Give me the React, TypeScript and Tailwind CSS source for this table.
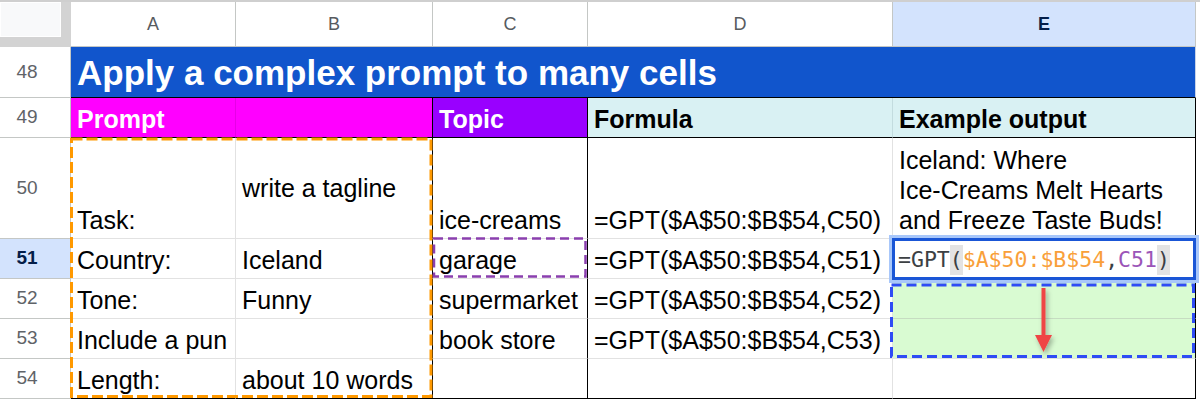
const cols = "grid grid-cols-[71px_165px_197px_155px_305px_303px_4px]";

const cell =
  "flex items-end pb-[3px] pl-[6px] leading-[30px] text-[25px] text-black whitespace-nowrap overflow-hidden border-r border-b";

const rowHead =
  "flex items-center justify-center pr-4 border-r border-b border-r-[#c4c7c5] border-b-[#c4c7c5] text-[19px] text-[#5f6368] bg-white";

const colHead =
  "flex items-center justify-center text-[18px] text-[#575b5f] bg-white border-r border-b border-r-[#c4c7c5] border-b-[#c4c7c5]";

function RowNum({ n, active }: { n: number; active?: boolean }) {
  return (
    <div className={active ? rowHead + " !bg-[#d3e3fd] font-bold !text-[#041e49]" : rowHead}>
      {n}
    </div>
  );
}

function Formula({ row }: { row: number }) {
  return (
    <div className={cell + " border-r-[#e2e2e2] border-b-[#e2e2e2]"}>
      =GPT($A$50:$B$54,C{row})
    </div>
  );
}

export default function App() {
  return (
    <div className="relative w-[1200px] h-[399px] overflow-hidden bg-white font-['Liberation_Sans',Arial,sans-serif]">
      {/* column headers */}
      <div className={cols + " h-[47px] border-t-2 border-t-[#cfcfcf]"}>
        <div className="bg-[#d3d3d3]">
          <div className="w-[61px] h-[35px] bg-[#f8f9fa] border border-white" />
        </div>
        <div className={colHead}>A</div>
        <div className={colHead}>B</div>
        <div className={colHead}>C</div>
        <div className={colHead}>D</div>
        <div className={colHead + " !bg-[#d3e3fd] font-bold !text-[#041e49]"}>E</div>
        <div className="bg-white" />
      </div>

      {/* 48 title */}
      <div className={cols + " h-[51px]"}>
        <RowNum n={48} />
        <div className="col-span-5 flex items-end pb-[4px] pl-[6px] leading-[40px] text-[35px] font-bold text-white whitespace-nowrap bg-[#1155cc] border-r border-b border-r-[#c9d3e6] border-b-black">
          Apply a complex prompt to many cells
        </div>
        <div className="bg-white" />
      </div>

      {/* 49 headers */}
      <div className={cols + " h-[40px]"}>
        <RowNum n={49} />
        <div className={cell + " bg-[#ff00ff] text-white! font-bold border-r-[#e600e6] border-b-black"}>Prompt</div>
        <div className={cell + " bg-[#ff00ff] border-r-black border-b-black"} />
        <div className={cell + " bg-[#9900ff] text-white! font-bold border-r-black border-b-black"}>Topic</div>
        <div className={cell + " bg-[#d9f1f3] font-bold border-r-[#c3dcdf] border-b-black"}>Formula</div>
        <div className={cell + " bg-[#d9f1f3] font-bold border-r-black border-b-black"}>Example output</div>
        <div className="bg-white" />
      </div>

      {/* 50 */}
      <div className={cols + " h-[101px]"}>
        <RowNum n={50} />
        <div className={cell + " border-r-[#e2e2e2] border-b-[#e2e2e2]"}>Task:</div>
        <div className={cell + " items-center! pb-0! border-r-black border-b-[#e2e2e2]"}>write a tagline</div>
        <div className={cell + " border-r-black border-b-[#e2e2e2]"}>ice-creams</div>
        <Formula row={50} />
        <div className={cell + " border-r-black border-b-[#e2e2e2]"}>
          <div>
            Iceland: Where
            <br />
            Ice-Creams Melt Hearts
            <br />
            and Freeze Taste Buds!
          </div>
        </div>
        <div className="bg-white" />
      </div>

      {/* 51 */}
      <div className={cols + " h-[40px]"}>
        <RowNum n={51} active />
        <div className={cell + " border-r-[#e2e2e2] border-b-[#e2e2e2]"}>Country:</div>
        <div className={cell + " border-r-black border-b-[#e2e2e2]"}>Iceland</div>
        <div className={cell + " border-r-black border-b-[#e2e2e2]"}>garage</div>
        <Formula row={51} />
        <div className={cell + " pl-[5px]! border-r-black border-b-[#e2e2e2] font-['DejaVu_Sans_Mono',monospace] text-[21.5px]!"}>
          <span className="text-[#3c4043]">=GPT</span>
          <span className="bg-[#e3e3e3] text-[#3c4043]">(</span>
          <span className="text-[#f9a03a]">$A$50:$B$54</span>
          <span className="text-[#3c4043]">,</span>
          <span className="text-[#9b55b8]">C51</span>
          <span className="bg-[#e3e3e3] text-[#3c4043]">)</span>
        </div>
        <div className="bg-white" />
      </div>

      {/* 52 */}
      <div className={cols + " h-[40px]"}>
        <RowNum n={52} />
        <div className={cell + " border-r-[#e2e2e2] border-b-[#e2e2e2]"}>Tone:</div>
        <div className={cell + " border-r-black border-b-[#e2e2e2]"}>Funny</div>
        <div className={cell + " border-r-black border-b-[#e2e2e2]"}>supermarket</div>
        <Formula row={52} />
        <div className={cell + " bg-[#d9fbd2] border-r-black border-b-[#c6dcc1]"} />
        <div className="bg-white" />
      </div>

      {/* 53 */}
      <div className={cols + " h-[40px]"}>
        <RowNum n={53} />
        <div className={cell + " border-r-[#e2e2e2] border-b-[#e2e2e2]"}>Include a pun</div>
        <div className={cell + " border-r-black border-b-[#e2e2e2]"} />
        <div className={cell + " border-r-black border-b-[#e2e2e2]"}>book store</div>
        <Formula row={53} />
        <div className={cell + " bg-[#d9fbd2] border-r-black border-b-[#e2e2e2]"} />
        <div className="bg-white" />
      </div>

      {/* 54 */}
      <div className={cols + " h-[40px]"}>
        <RowNum n={54} />
        <div className={cell + " border-r-[#e2e2e2] border-b-black"}>Length:</div>
        <div className={cell + " border-r-black border-b-black"}>about 10 words</div>
        <div className={cell + " border-r-black border-b-black"} />
        <div className={cell + " border-r-[#e2e2e2] border-b-black"} />
        <div className={cell + " border-r-black border-b-black"} />
        <div className="bg-white" />
      </div>

      {/* active cell E51 */}
      <div className="absolute left-[889px] top-[235px] w-[310px] h-[48px] border-[3px] border-[#a8c7fa]">
        <div className="w-full h-full border-[3px] border-[#1a56d6]" />
      </div>

      {/* copy / reference outlines and fill arrow */}
      <svg className="absolute left-0 top-0 pointer-events-none" width="1200" height="399" viewBox="0 0 1200 399">
        <defs>
          <filter id="sh" x="-50%" y="-20%" width="200%" height="160%">
            <feDropShadow dx="2" dy="3" stdDeviation="2.5" floodColor="#000" floodOpacity="0.3" />
          </filter>
        </defs>
        <rect x="71.5" y="139" width="359.5" height="257.5" fill="none" stroke="#ff9900" strokeWidth="3" strokeDasharray="11 4" />
        <rect x="434" y="238.5" width="151.5" height="38" fill="none" stroke="#8a3fae" strokeWidth="2.5" strokeDasharray="9 5" />
        <rect x="891.5" y="285" width="302" height="71.5" fill="none" stroke="#2f4cf5" strokeWidth="3" strokeDasharray="10 5" />
        <g filter="url(#sh)">
          <line x1="1043.5" y1="288" x2="1043.5" y2="338" stroke="#ef4444" strokeWidth="4" />
          <polygon points="1035,335 1052,335 1043.5,352" fill="#ef4444" />
        </g>
      </svg>
    </div>
  );
}
